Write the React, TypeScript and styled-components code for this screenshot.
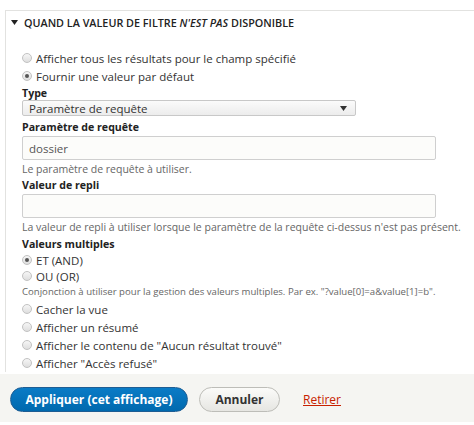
import React from "react";
import styled, { createGlobalStyle } from "styled-components";

const Global = createGlobalStyle`
  html, body { margin: 0; padding: 0; background: #fff; overflow: hidden; }
  body { font-family: "Open Sans", "Noto Sans", sans-serif; color: #333; }
  * { box-sizing: border-box; }
`;

const Page = styled.div`
  width: 474px;
  height: 425px;
  display: flex;
  flex-direction: column;
`;

const Fieldset = styled.div`
  margin: 10px 0 0 5px;
  border-top: 1px solid #e2e2e0;
  border-left: 1px solid #e2e2e0;
  padding: 3px 0 0 0;
`;

const Legend = styled.div`
  display: flex;
  align-items: center;
  gap: 6px;
  padding-left: 5px;
  height: 16px;
  font-size: 10.8px;
  font-weight: 600;
  text-transform: uppercase;
  color: #222;
  em { font-style: italic; margin-right: 3px; }
`;

const Content = styled.div`
  padding: 0 0 0 16px;
  display: flex;
  flex-direction: column;
`;

const RadioGroup = styled.div<{ $mt: number }>`
  margin-top: ${(p) => p.$mt}px;
  display: flex;
  flex-direction: column;
`;

const RadioRow = styled.label<{ $h: number }>`
  display: flex;
  align-items: center;
  gap: 4px;
  height: ${(p) => p.$h}px;
  font-size: 11.5px;
  color: #333;
`;

const RadioMark = styled.span<{ $checked?: boolean }>`
  position: relative;
  width: 10px;
  height: 10px;
  border-radius: 50%;
  border: 1px solid #c2c2c2;
  background: linear-gradient(#f6f6f6, #dedede);
  flex: none;
  &::after {
    content: "";
    display: ${(p) => (p.$checked ? "block" : "none")};
    position: absolute;
    left: 2px;
    top: 2px;
    width: 4px;
    height: 4px;
    border-radius: 50%;
    background: #555;
  }
`;

const FieldLabel = styled.div<{ $mt: number }>`
  margin-top: ${(p) => p.$mt}px;
  font-size: 10.6px;
  font-weight: 700;
  line-height: 14px;
  color: #222;
`;

const Select = styled.div`
  width: 334px;
  height: 16px;
  display: flex;
  align-items: center;
  justify-content: space-between;
  padding: 0 8px 0 6px;
  border: 1px solid #c8c8c8;
  border-radius: 2px;
  background: linear-gradient(#fbfbfb, #ececec);
  font-size: 11.5px;
  color: #333;
`;

const Arrow = styled.svg`
  width: 7px;
  height: 5px;
`;

const TextBox = styled.div<{ $mt: number }>`
  margin-top: ${(p) => p.$mt}px;
  width: 414px;
  height: 24px;
  display: flex;
  align-items: center;
  padding-left: 6px;
  border: 1px solid #cfcfcf;
  border-radius: 2px;
  background: #fcfcfa;
  font-size: 11.5px;
  color: #555;
`;

const Description = styled.div<{ $mt: number; $size: number }>`
  margin-top: ${(p) => p.$mt}px;
  font-size: ${(p) => p.$size}px;
  line-height: 13px;
  color: #666;
  white-space: nowrap;
`;

const Footer = styled.div`
  margin-top: 2px;
  height: 48px;
  background: #f5f5f2;
  display: flex;
  align-items: flex-start;
  padding: 13px 0 0 10px;
`;

const PrimaryButton = styled.button`
  width: 178px;
  height: 25px;
  border-radius: 13px;
  border: 1px solid #1e5d93;
  background: linear-gradient(#0a7bc6, #0069ae);
  color: #fff;
  font-family: inherit;
  font-size: 12px;
  font-weight: 700;
  padding: 0;
`;

const SecondaryButton = styled.button`
  margin-left: 11px;
  width: 81px;
  height: 25px;
  border-radius: 13px;
  border: 1px solid #bdbdb8;
  background: linear-gradient(#fbfbf9, #e6e6e2);
  color: #333;
  font-family: inherit;
  font-size: 12px;
  font-weight: 700;
  padding: 0;
`;

const LinkButton = styled.a`
  margin-left: 23px;
  line-height: 25px;
  font-size: 12px;
  color: #c72100;
  text-decoration: underline;
`;

type RadioItem = { label: string; checked?: boolean };

const Radios: React.FC<{ items: RadioItem[]; h: number; mt: number }> = ({ items, h, mt }) => (
  <RadioGroup $mt={mt}>
    {items.map((it) => (
      <RadioRow key={it.label} $h={h}>
        <RadioMark $checked={it.checked} />
        {it.label}
      </RadioRow>
    ))}
  </RadioGroup>
);

export default function App() {
  return (
    <Page>
      <Global />
      <Fieldset>
        <Legend>
          <Arrow viewBox="0 0 7 5">
            <path d="M0 0 H7 L3.5 5 Z" fill="#222" />
          </Arrow>
          <span>
            Quand la valeur de filtre <em>n'est pas</em>disponible
          </span>
        </Legend>
        <Content>
          <Radios
            mt={19}
            h={18}
            items={[
              { label: "Afficher tous les résultats pour le champ spécifié" },
              { label: "Fournir une valeur par défaut", checked: true },
            ]}
          />
          <FieldLabel $mt={1}>Type</FieldLabel>
          <Select>
            <span>Paramètre de requête</span>
            <Arrow viewBox="0 0 7 5">
              <path d="M0 0 H7 L3.5 5 Z" fill="#333" />
            </Arrow>
          </Select>
          <FieldLabel $mt={4}>Paramètre de requête</FieldLabel>
          <TextBox $mt={2}>dossier</TextBox>
          <Description $mt={3} $size={10.5}>
            Le paramètre de requête à utiliser.
          </Description>
          <FieldLabel $mt={2}>Valeur de repli</FieldLabel>
          <TextBox $mt={2} />
          <Description $mt={3} $size={10.5}>
            La valeur de repli à utiliser lorsque le paramètre de la requête ci-dessus n'est pas présent.
          </Description>
          <FieldLabel $mt={3}>Valeurs multiples</FieldLabel>
          <Radios
            mt={1}
            h={16}
            items={[{ label: "ET (AND)", checked: true }, { label: "OU (OR)" }]}
          />
          <Description $mt={1} $size={9.6}>
            Conjonction à utiliser pour la gestion des valeurs multiples. Par ex. "?value[0]=a&amp;value[1]=b".
          </Description>
          <Radios
            mt={2}
            h={18}
            items={[
              { label: "Cacher la vue" },
              { label: "Afficher un résumé" },
              { label: "Afficher le contenu de \"Aucun résultat trouvé\"" },
              { label: "Afficher \"Accès refusé\"" },
            ]}
          />
        </Content>
      </Fieldset>
      <Footer>
        <PrimaryButton>Appliquer (cet affichage)</PrimaryButton>
        <SecondaryButton>Annuler</SecondaryButton>
        <LinkButton href="#">Retirer</LinkButton>
      </Footer>
    </Page>
  );
}
